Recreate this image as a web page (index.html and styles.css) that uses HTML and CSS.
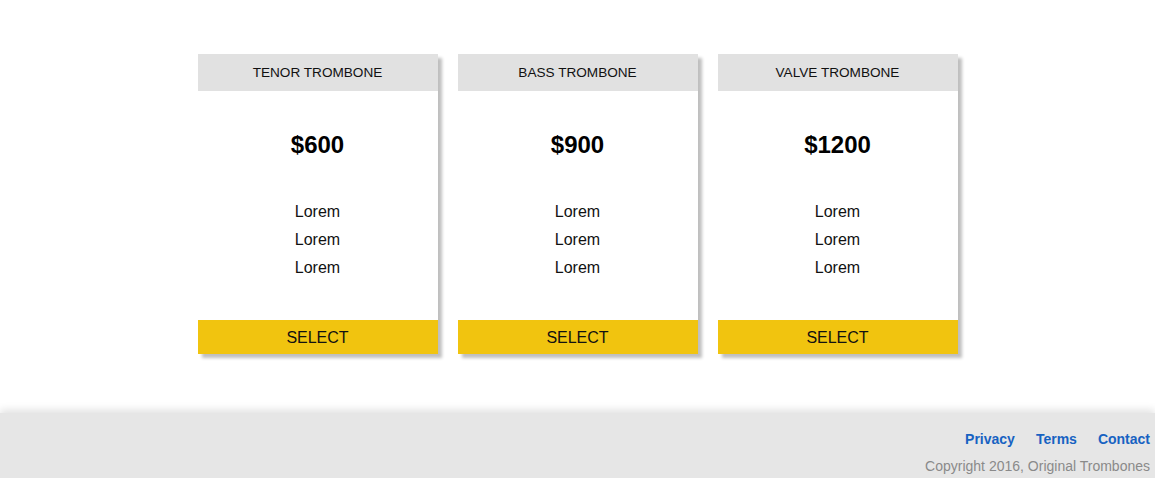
FILE: index.html
```html
<!DOCTYPE html>
<html lang="en">
<head>
    <meta charset="UTF-8">
    <meta name="viewport" content="width=device-width, initial-scale=1.0">
    <title>Original Trombones</title>
    <link rel="stylesheet" href="styles.css">
</head>
<body>
    <main class="pricing">
        <div class="card">
            <div class="card-title">Tenor Trombone</div>
            <div class="price">$600</div>
            <ul class="features">
                <li>Lorem</li>
                <li>Lorem</li>
                <li>Lorem</li>
            </ul>
            <button class="select">Select</button>
        </div>
        <div class="card">
            <div class="card-title">Bass Trombone</div>
            <div class="price">$900</div>
            <ul class="features">
                <li>Lorem</li>
                <li>Lorem</li>
                <li>Lorem</li>
            </ul>
            <button class="select">Select</button>
        </div>
        <div class="card">
            <div class="card-title">Valve Trombone</div>
            <div class="price">$1200</div>
            <ul class="features">
                <li>Lorem</li>
                <li>Lorem</li>
                <li>Lorem</li>
            </ul>
            <button class="select">Select</button>
        </div>
    </main>

    <footer class="footer">
        <nav class="footer-links">
            <a href="#">Privacy</a>
            <a href="#">Terms</a>
            <a href="#">Contact</a>
        </nav>
        <div class="copyright">Copyright 2016, Original Trombones</div>
    </footer>
</body>
</html>
```

FILE: styles.css
```css
body {
    font-family: 'Liberation Sans', Arial, sans-serif;
    margin: 0;
    padding: 0;
    background: #ffffff;
    color: #111;
}

.pricing {
    display: flex;
    justify-content: center;
    gap: 20px;
    padding: 54px 0 59px;
}

.card {
    width: 240px;
    display: flex;
    flex-direction: column;
    background: #fff;
    box-shadow: 4px 4px 3px rgba(0, 0, 0, 0.25);
}

.card-title {
    height: 37px;
    line-height: 37px;
    background: #e1e1e1;
    text-align: center;
    text-transform: uppercase;
    font-size: 13.6px;
}

.price {
    padding-top: 40px;
    line-height: 28px;
    font-size: 24px;
    font-weight: bold;
    text-align: center;
    color: #000;
}

.features {
    list-style: none;
    margin: 39px 0 38px;
    padding: 0;
    text-align: center;
    font-size: 16px;
    line-height: 28px;
}

.select {
    display: block;
    width: 100%;
    height: 34px;
    padding: 2px 0 0;
    border: none;
    background: #f1c40f;
    font-family: inherit;
    font-size: 16px;
    text-transform: uppercase;
    color: #111;
    cursor: pointer;
}

.footer {
    height: 65px;
    box-sizing: border-box;
    padding: 16px 5px 0 0;
    background: #e6e6e6;
    box-shadow: 0 -3px 8px rgba(0, 0, 0, 0.12);
    text-align: right;
    font-size: 14px;
    line-height: 20px;
}

.footer-links {
    display: flex;
    justify-content: flex-end;
    gap: 21px;
    margin-bottom: 7px;
}

.footer-links a {
    color: #1762c2;
    font-weight: bold;
    text-decoration: none;
}

.copyright {
    color: #8a8a8a;
}
```
